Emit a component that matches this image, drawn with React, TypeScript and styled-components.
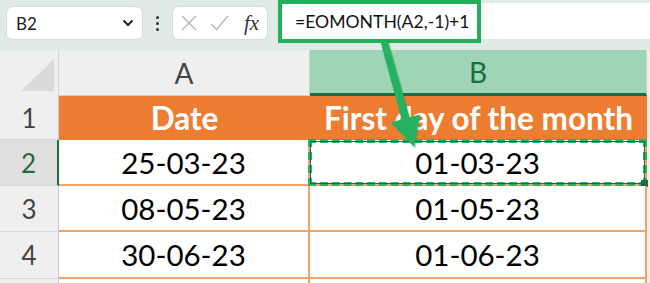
import styled, { createGlobalStyle } from 'styled-components';

const GlobalStyle = createGlobalStyle`
  body {
    margin: 0;
    background: #ffffff;
    overflow: hidden;
  }
`;

const Page = styled.div`
  position: relative;
  width: 650px;
  height: 283px;
  overflow: hidden;
  background: #efefef;
  font-family: Lato, 'Open Sans', sans-serif;
`;

const Toolbar = styled.div`
  display: flex;
  align-items: flex-start;
  height: 50px;
  background: #e1ebe5;
  box-sizing: border-box;
  padding-left: 6px;
`;

const NameBox = styled.div`
  display: flex;
  align-items: center;
  justify-content: space-between;
  box-sizing: border-box;
  width: 137px;
  height: 34px;
  margin-top: 6px;
  padding: 0 8px 0 9px;
  background: #fff;
  border: 1px solid #d7dcd9;
  border-radius: 7px;
  font-size: 17px;
  color: #222;
`;

const Dots = styled.div`
  display: flex;
  flex-direction: column;
  align-items: center;
  justify-content: center;
  gap: 3px;
  width: 29px;
  height: 34px;
  margin-top: 6px;
`;

const Dot = styled.span`
  width: 3px;
  height: 3px;
  border-radius: 50%;
  background: #333;
`;

const FxBox = styled.div`
  display: flex;
  align-items: center;
  gap: 13px;
  box-sizing: border-box;
  width: 96px;
  height: 34px;
  margin-top: 6px;
  padding: 0 0 0 8px;
  background: #fff;
  border: 1px solid #d7dcd9;
  border-radius: 7px;
`;

const Fx = styled.span`
  font-family: 'Liberation Serif', serif;
  font-style: italic;
  font-size: 21px;
  color: #333;
  margin-left: 2px;
`;

const FormulaBar = styled.div`
  flex: 1;
  display: flex;
  height: 36px;
  margin: 3px 0 0 10px;
  background: #fff;
`;

const FormulaCell = styled.div`
  display: flex;
  align-items: center;
  box-sizing: border-box;
  width: 203px;
  height: 43px;
  margin-top: -3px;
  padding-left: 13px;
  border: 4px solid #22b05c;
  background: #fff;
  font-size: 17.6px;
  color: #111;
`;

const Sheet = styled.div`
  display: grid;
  grid-template-columns: 59px 251px 337px 1fr;
  grid-template-rows: 46px 44px 46px 46px 47px 10px;
`;

const Corner = styled.div`
  display: flex;
  align-items: flex-end;
  justify-content: flex-end;
  padding: 0 4px 5px 0;
  background: #efefef;
  border-right: 1px solid #d6d6d6;
`;

const ColHead = styled.div<{ $active?: boolean }>`
  display: flex;
  align-items: center;
  justify-content: center;
  box-sizing: border-box;
  font-size: 28px;
  background: ${({ $active }) => ($active ? '#9fd5b6' : '#efefef')};
  color: ${({ $active }) => ($active ? '#1d6b3e' : '#444')};
  border-right: 1px solid #d0d0d0;
  border-bottom: ${({ $active }) => ($active ? '3px solid #1e6e40' : '1px solid #cfcfcf')};
`;

const Filler = styled.div`
  background: #efefef;
`;

const RowHead = styled.div<{ $active?: boolean }>`
  display: flex;
  align-items: center;
  justify-content: center;
  box-sizing: border-box;
  font-size: 26px;
  background: ${({ $active }) => ($active ? '#e0e0e0' : '#efefef')};
  color: ${({ $active }) => ($active ? '#1d6b3e' : '#444')};
  border-bottom: 1px solid #d8d8d8;
  border-right: ${({ $active }) => ($active ? '2px solid #1e6e40' : '1px solid #c9c9c9')};
`;

const HeadCell = styled.div`
  display: flex;
  align-items: center;
  justify-content: center;
  background: #ed7d31;
  color: #fff;
  font-weight: 700;
  font-size: 31.5px;
  white-space: nowrap;
`;

const Cell = styled.div`
  position: relative;
  display: flex;
  align-items: center;
  justify-content: center;
  box-sizing: border-box;
  background: #fff;
  color: #000;
  font-size: 29.5px;
  border-right: 2px solid #f5a269;
  border-bottom: 2px solid #f5a269;
`;

const Marquee = styled.div`
  position: absolute;
  top: -1px;
  left: -2px;
  right: -2px;
  bottom: -2px;
  border: 4px dashed #27b363;
  outline: 1px solid #1d6b3e;
  outline-offset: -3px;
  pointer-events: none;
`;

const Handle = styled.span`
  position: absolute;
  right: -5px;
  bottom: -5px;
  width: 7px;
  height: 7px;
  background: #1d6b3e;
`;

const Arrow = styled.svg`
  position: absolute;
  left: 0;
  top: 0;
  pointer-events: none;
`;

const rows = [
  ['25-03-23', '01-03-23'],
  ['08-05-23', '01-05-23'],
  ['30-06-23', '01-06-23'],
];

const arrowPoints = '380.5,42 387.5,40 409.5,117.5 420,114.5 414,147 390.5,122.5 401.5,119.5';

export default function App() {
  return (
    <Page>
      <GlobalStyle />
      <Toolbar>
        <NameBox>
          <span>B2</span>
          <svg width="12" height="8" viewBox="0 0 12 8">
            <path d="M1.5 1.5 L6 6 L10.5 1.5" fill="none" stroke="#222" strokeWidth="2" />
          </svg>
        </NameBox>
        <Dots>
          <Dot />
          <Dot />
          <Dot />
        </Dots>
        <FxBox>
          <svg width="16" height="16" viewBox="0 0 16 16">
            <path d="M1 1 L15 15 M15 1 L1 15" stroke="#b4b4b4" strokeWidth="1.3" />
          </svg>
          <svg width="19" height="16" viewBox="0 0 19 16">
            <path d="M1 9 L6.5 14.5 L18 1" fill="none" stroke="#b4b4b4" strokeWidth="1.3" />
          </svg>
          <Fx>fx</Fx>
        </FxBox>
        <FormulaBar>
          <FormulaCell>=EOMONTH(A2,-1)+1</FormulaCell>
        </FormulaBar>
      </Toolbar>
      <Sheet>
        <Corner>
          <svg width="33" height="32" viewBox="0 0 33 32">
            <polygon points="33,0 33,32 0,32" fill="#dadada" />
          </svg>
        </Corner>
        <ColHead>A</ColHead>
        <ColHead $active>B</ColHead>
        <Filler />

        <RowHead>1</RowHead>
        <HeadCell>Date</HeadCell>
        <HeadCell>First day of the month</HeadCell>
        <Filler />

        {rows.map(([a, b], i) => [
          <RowHead key={`r${i}`} $active={i === 0}>
            {i + 2}
          </RowHead>,
          <Cell key={`a${i}`}>{a}</Cell>,
          <Cell key={`b${i}`}>
            {b}
            {i === 0 && (
              <Marquee>
                <Handle />
              </Marquee>
            )}
          </Cell>,
          <Filler key={`f${i}`} />,
        ])}

        <RowHead />
        <Cell />
        <Cell />
        <Filler />
      </Sheet>
      <Arrow width="650" height="283" viewBox="0 0 650 283">
        <polygon points={arrowPoints} fill="#1b8a48" opacity="0.35" transform="translate(1.5,1.5)" />
        <polygon points={arrowPoints} fill="#25b15f" />
      </Arrow>
    </Page>
  );
}
